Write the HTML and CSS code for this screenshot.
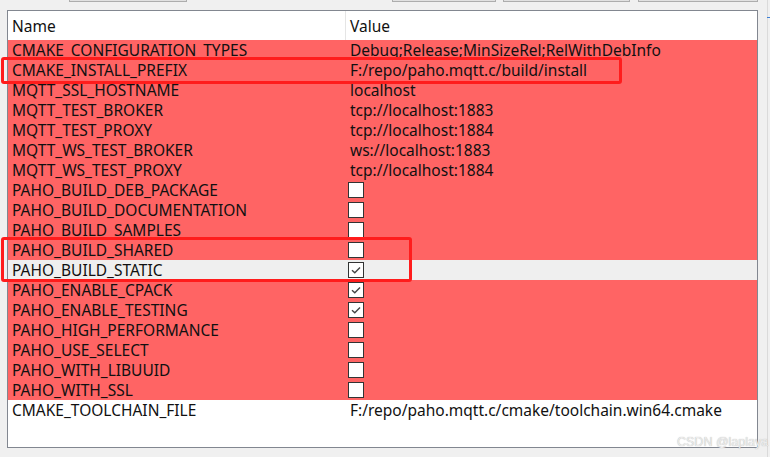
FILE: index.html
```html
<!DOCTYPE html>
<html>
<head>
<meta charset="utf-8">
<link rel="stylesheet" href="styles.css">
</head>
<body>
<div class="screen">
  <div class="toolbar">
    <div class="btn b1"></div>
    <div class="btn b2"></div>
    <div class="btn b3"></div>
    <div class="btn b4"></div>
  </div>
  <div class="main">
    <div class="table">
      <div class="row head"><div class="c1">Name</div><div class="c2">Value</div></div>
      <div class="row red"><div class="c1">CMAKE_CONFIGURATION_TYPES</div><div class="c2">Debug;Release;MinSizeRel;RelWithDebInfo</div></div>
      <div class="row red"><div class="c1">CMAKE_INSTALL_PREFIX</div><div class="c2">F:/repo/paho.mqtt.c/build/install</div></div>
      <div class="row red"><div class="c1">MQTT_SSL_HOSTNAME</div><div class="c2">localhost</div></div>
      <div class="row red"><div class="c1">MQTT_TEST_BROKER</div><div class="c2">tcp://localhost:1883</div></div>
      <div class="row red"><div class="c1">MQTT_TEST_PROXY</div><div class="c2">tcp://localhost:1884</div></div>
      <div class="row red"><div class="c1">MQTT_WS_TEST_BROKER</div><div class="c2">ws://localhost:1883</div></div>
      <div class="row red"><div class="c1">MQTT_WS_TEST_PROXY</div><div class="c2">tcp://localhost:1884</div></div>
      <div class="row red"><div class="c1">PAHO_BUILD_DEB_PACKAGE</div><div class="c2"><span class="cb"></span></div></div>
      <div class="row red"><div class="c1">PAHO_BUILD_DOCUMENTATION</div><div class="c2"><span class="cb"></span></div></div>
      <div class="row red"><div class="c1">PAHO_BUILD_SAMPLES</div><div class="c2"><span class="cb"></span></div></div>
      <div class="row red"><div class="c1">PAHO_BUILD_SHARED</div><div class="c2"><span class="cb"></span></div></div>
      <div class="row sel"><div class="c1">PAHO_BUILD_STATIC</div><div class="c2"><span class="cb"><svg viewBox="0 0 14 14" width="14" height="14"><path d="M3 7.2 L5.8 9.8 L11 4.6" fill="none" stroke="#444" stroke-width="1.4"/></svg></span></div></div>
      <div class="row red"><div class="c1">PAHO_ENABLE_CPACK</div><div class="c2"><span class="cb"><svg viewBox="0 0 14 14" width="14" height="14"><path d="M3 7.2 L5.8 9.8 L11 4.6" fill="none" stroke="#444" stroke-width="1.4"/></svg></span></div></div>
      <div class="row red"><div class="c1">PAHO_ENABLE_TESTING</div><div class="c2"><span class="cb"><svg viewBox="0 0 14 14" width="14" height="14"><path d="M3 7.2 L5.8 9.8 L11 4.6" fill="none" stroke="#444" stroke-width="1.4"/></svg></span></div></div>
      <div class="row red"><div class="c1">PAHO_HIGH_PERFORMANCE</div><div class="c2"><span class="cb"></span></div></div>
      <div class="row red"><div class="c1">PAHO_USE_SELECT</div><div class="c2"><span class="cb"></span></div></div>
      <div class="row red"><div class="c1">PAHO_WITH_LIBUUID</div><div class="c2"><span class="cb"></span></div></div>
      <div class="row red"><div class="c1">PAHO_WITH_SSL</div><div class="c2"><span class="cb"></span></div></div>
      <div class="row"><div class="c1">CMAKE_TOOLCHAIN_FILE</div><div class="c2">F:/repo/paho.mqtt.c/cmake/toolchain.win64.cmake</div></div>
    </div>
    <div class="side"><span class="tick"></span></div>
  </div>
  <div class="mark m1"></div>
  <div class="mark m2"></div>
  <div class="wm">CSDN @laplaya</div>
</div>
</body>
</html>
```
FILE: styles.css
```css
html, body {
  margin: 0;
  padding: 0;
  background: #f0f0f0;
}
.screen {
  position: relative;
  width: 770px;
  height: 457px;
  overflow: hidden;
  background: #f0f0f0;
  font-family: "Noto Sans", "Liberation Sans", sans-serif;
  font-size: 15.5px;
  color: #111;
}
.toolbar {
  display: flex;
  height: 2px;
}
.btn {
  height: 1px;
  border: 1px solid #adadad;
  border-top: none;
  background: #e1e1e1;
}
.b1 { margin-left: 69px; width: 116px; }
.b2 { margin-left: 205px; width: 102px; }
.b3 { margin-left: 7px; width: 125px; }
.b4 { margin-left: 8px; width: 118px; }
.main {
  display: flex;
  margin-top: 8px;
}
.table {
  margin-left: 7px;
  width: 749px;
  height: 436px;
  border: 1px solid #828790;
  background: #fff;
}
.side {
  margin-left: 9px;
  margin-top: -10px;
  width: 1px;
  height: 457px;
  background: #dadada;
  position: relative;
}
.tick {
  position: absolute;
  left: 0;
  top: 17px;
  width: 4px;
  height: 1px;
  background: #3c7fd6;
}
.row {
  display: flex;
  height: 20px;
  white-space: nowrap;
}
.row.red { background: #ff6464; }
.row.sel { background: #efefef; }
.c1 {
  box-sizing: border-box;
  height: 20px;
  width: 338px;
  padding-left: 4px;
  padding-top: 1px;
  line-height: 19px;
  overflow: hidden;
}
.c2 {
  box-sizing: border-box;
  height: 20px;
  padding-left: 4px;
  padding-top: 1px;
  line-height: 19px;
  display: flex;
  align-items: center;
}
.row.head {
  height: 29px;
  background: #fff;
}
.row.head .c1, .row.head .c2 {
  height: 29px;
  padding-top: 1px;
  line-height: 28px;
}
.row.head .c1 {
  border-right: 1px solid #e5e5e5;
}
.cb {
  box-sizing: border-box;
  width: 16px;
  height: 16px;
  border: 1px solid #333;
  background: #fff;
  margin-left: -2px;
  margin-top: -1px;
  display: flex;
  align-items: center;
  justify-content: center;
}
.cb svg { display: block; }
.mark {
  position: absolute;
  border: 3px solid #ff1c1c;
  border-radius: 3px;
  box-sizing: border-box;
}
.m1 { left: 1px; top: 57px; width: 621px; height: 27px; }
.m2 { left: 1px; top: 237px; width: 411px; height: 45px; }
.wm {
  position: absolute;
  left: 677px;
  top: 435px;
  font-size: 12.5px;
  color: #ececec;
  text-shadow: 0 0 1px #aaa;
  font-family: "Liberation Sans", sans-serif;
}
```
